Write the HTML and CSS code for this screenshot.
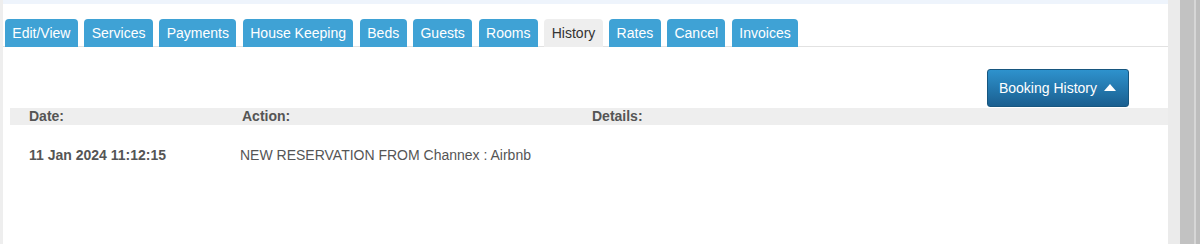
FILE: index.html
```html
<!DOCTYPE html>
<html lang="en">

<head>
    <meta charset="UTF-8">
    <meta name="viewport" content="width=device-width, initial-scale=1.0">
    <title>Booking | History</title>
    <link rel="stylesheet" href="styles.css">
</head>

<body>
    <div class="frame">
        <div class="main">
            <div class="topbar"></div>
            <ul class="tabs">
                <li class="tab">Edit/View</li>
                <li class="tab">Services</li>
                <li class="tab">Payments</li>
                <li class="tab">House Keeping</li>
                <li class="tab">Beds</li>
                <li class="tab">Guests</li>
                <li class="tab">Rooms</li>
                <li class="tab active">History</li>
                <li class="tab">Rates</li>
                <li class="tab">Cancel</li>
                <li class="tab">Invoices</li>
            </ul>
            <div class="toolbar">
                <a class="button">Booking History <span class="caret"></span></a>
            </div>
            <div class="history">
                <div class="row head">
                    <div class="cell">Date:</div>
                    <div class="cell">Action:</div>
                    <div class="cell">Details:</div>
                </div>
                <div class="row item">
                    <div class="cell date">11 Jan 2024 11:12:15</div>
                    <div class="cell action">NEW RESERVATION FROM Channex : Airbnb</div>
                    <div class="cell"></div>
                </div>
            </div>
        </div>
        <div class="side">
            <div class="gutter"></div>
            <div class="scroll"></div>
        </div>
    </div>
</body>

</html>
```

FILE: styles.css
```css
html,
body {
    margin: 0;
    height: 100%;
    background: #FFF;
    font-family: "Liberation Sans", Arial, sans-serif;
    font-size: 14px;
    color: #555;
}

.frame {
    display: flex;
    height: 244px;
    overflow: hidden;
}

.main {
    width: 1165px;
    border-left: 3px solid #EEE;
}

.topbar {
    height: 4px;
    background: #EEF4FC;
}

.tabs {
    display: flex;
    gap: 6.6px;
    margin: 15px 0 0 0;
    padding: 0 0 0 2px;
    list-style: none;
    border-bottom: 1px solid #E2E2E2;
}

.tab {
    height: 28px;
    line-height: 29px;
    padding: 0 7.35px;
    margin-bottom: -1px;
    background-color: #3FA2D5;
    color: #FFF;
    border-radius: 4px 4px 0 0;
    cursor: pointer;
}

.tab.active {
    background-color: #EEE;
    color: #333;
}

.toolbar {
    display: flex;
    justify-content: flex-end;
    padding: 22px 39px 0 0;
}

.button {
    display: inline-flex;
    align-items: center;
    gap: 7px;
    height: 38px;
    padding: 0 12px 0 11px;
    box-sizing: border-box;
    border: 1px solid #17567F;
    border-radius: 3px;
    background: linear-gradient(#2E92CD, #1A5F90);
    color: #FFF;
    cursor: pointer;
}

.caret {
    width: 0;
    height: 0;
    border-left: 6px solid transparent;
    border-right: 6px solid transparent;
    border-bottom: 7px solid #FFF;
    margin-top: -2px;
}

.history {
    margin: 1px 0 0 7px;
}

.row {
    display: grid;
    grid-template-columns: 213px 350px 1fr;
}

.row.head {
    height: 17px;
    line-height: 17px;
    background: #EEE;
    font-weight: bold;
}

.cell {
    padding-left: 19px;
}

.row.item {
    padding-top: 22px;
    line-height: 17px;
}

.date {
    font-weight: bold;
}

.action {
    padding-left: 17px;
}

.side {
    flex: 1;
    display: flex;
}

.gutter {
    width: 12px;
    background: #EBEBEB;
}

.scroll {
    flex: 1;
    background: #C2C2C2;
    border-right: 4px solid #BDBDBD;
    box-shadow: inset -2px 0 0 #D6D6D6;
}
```
